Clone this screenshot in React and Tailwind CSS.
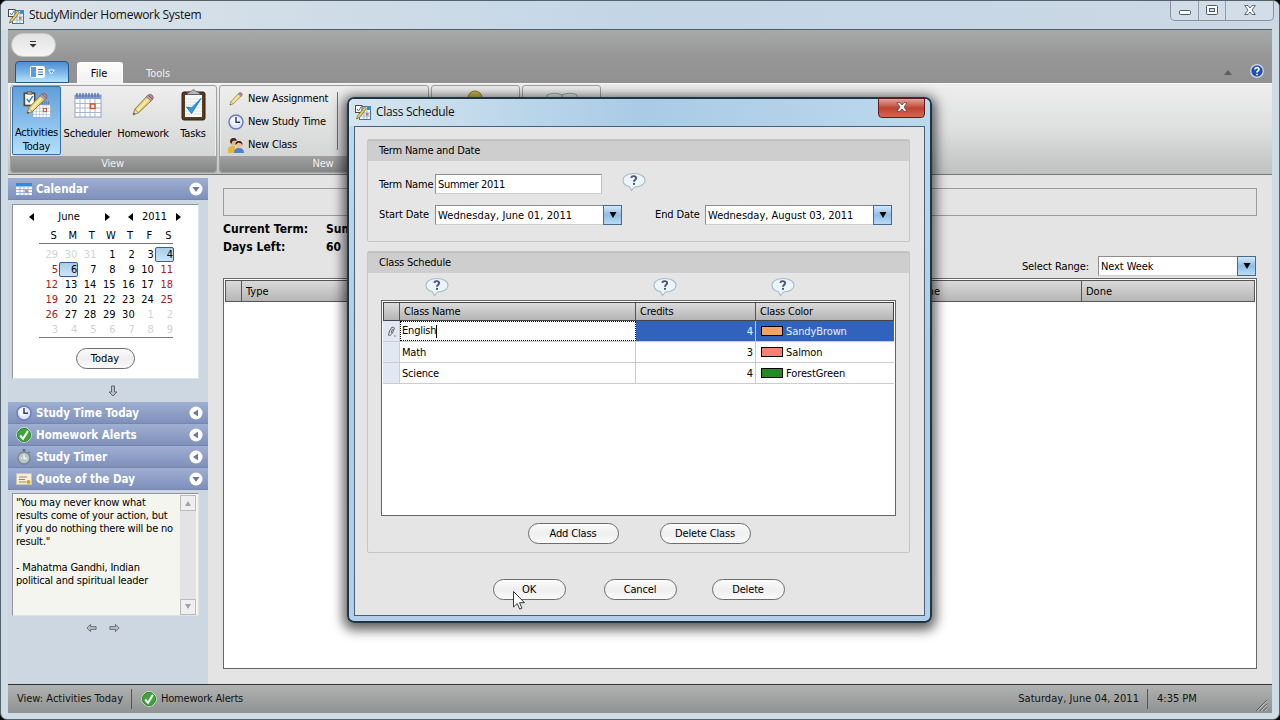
import React from "react";

const PencilShape = () => (
  <g>
    <path d="M4 28 L6 21 L22 4 L28 9 L11 25 Z" fill="#e9d27c" stroke="#8c7436" strokeWidth="1.2" />
    <path d="M8 22 L23.500 6 L25 7 L10 24 Z" fill="#f8efb6" />
    <path d="M20 6 L22 4 L28 9 L26 11 Z" fill="#a8adb5" stroke="#666" strokeWidth=".8" />
    <path d="M22.500 4 L24 2.500 Q28 3 29 7 L27.500 9 Z" fill="#c9808a" stroke="#80505a" strokeWidth=".8" />
    <path d="M4 28 L6 21.500 L10.500 25.500 Z" fill="#f3dfc0" stroke="#8c7436" strokeWidth=".8" />
    <path d="M4 28 L5 25.500 L6.500 27 Z" fill="#333" />
  </g>
);

const Pencil = ({ className }) => (
  <svg viewBox="0 0 32 32" className={className}>
    <PencilShape />
  </svg>
);

const CalShape = () => (
  <g>
    <rect x="3" y="6" width="26" height="22" fill="#fff" stroke="#8fa3c4" />
    <rect x="3" y="6" width="26" height="4" fill="#7f9bd0" />
    <path d="M5 4v4M8 4v4M11 4v4M14 4v4M17 4v4M20 4v4M23 4v4M26 4v4" stroke="#5470a8" strokeWidth="1.300" />
    <path d="M3 14.500h26M3 19h26M3 23.500h26M8 10v18M13 10v18M18 10v18M23 10v18" stroke="#9fb0cc" strokeWidth=".9" />
    <rect x="18.500" y="15" width="4.500" height="4.500" fill="#fff" stroke="#d5522c" strokeWidth="1.500" />
  </g>
);

const CalendarBig = () => (
  <svg viewBox="0 0 32 32" className="h-8 w-8">
    <CalShape />
  </svg>
);

const ActivitiesIcon = () => (
  <svg viewBox="0 0 32 32" className="h-8 w-8">
    <g transform="translate(9.500 9) scale(.72)">
      <CalShape />
    </g>
    <rect x="2.500" y="3.500" width="11" height="13" fill="#fff" stroke="#5b4634" strokeWidth="1.800" />
    <rect x="5.500" y="1.500" width="5" height="3" fill="#999" stroke="#555" strokeWidth=".6" />
    <path d="M5 9.500l2.500 3 4-6" fill="none" stroke="#3186c8" strokeWidth="1.600" />
    <g transform="translate(2 1) scale(.86)">
      <PencilShape />
    </g>
  </svg>
);

const TasksIcon = () => (
  <svg viewBox="0 0 32 32" className="h-8 w-8">
    <rect x="5" y="3" width="23" height="28" rx="2" fill="#5a3a1e" stroke="#33200f" />
    <rect x="8" y="6" width="17" height="22" fill="#f7fafc" />
    <path d="M8 10h17M8 13h17M8 16h17M8 19h17M8 22h17M8 25h17" stroke="#d3dce4" strokeWidth=".8" />
    <path d="M10 5.500 Q10 3 14 2.500 Q16.500 -1 19 2.500 Q23 3 23 5.500Z" fill="#b7babd" stroke="#555" strokeWidth=".8" />
    <path d="M9.500 18l5 6.500 9.500-15-9.500 9.500z" fill="#2f9fe0" stroke="#1c7fc0" strokeWidth="1" />
  </svg>
);

const ClockIcon = () => (
  <svg viewBox="0 0 16 16" className="h-4 w-4">
    <circle cx="8" cy="8" r="7" fill="#dfe6fa" stroke="#6c7cbc" strokeWidth="1.500" />
    <circle cx="7" cy="7" r="4" fill="#f6f9ff" />
    <path d="M8 3v5.300h4" fill="none" stroke="#333c78" strokeWidth="1.500" />
  </svg>
);

const TimerIcon = () => (
  <svg viewBox="0 0 16 16" className="h-4 w-4">
    <path d="M8 0v3M6.500 1h3M12.500 3l1 1" stroke="#5f6d70" strokeWidth="1.500" />
    <circle cx="8" cy="9" r="6" fill="#b9c6c6" stroke="#77868a" strokeWidth="1.300" />
    <path d="M8 5.500v4h3M5 9h1" fill="none" stroke="#f3f8f8" strokeWidth="1.300" />
  </svg>
);

const CheckCircle = () => (
  <svg viewBox="0 0 16 16" className="h-4 w-4">
    <circle cx="8" cy="8" r="7.200" fill="#3fa53a" stroke="#e3f2e0" strokeWidth="1" />
    <circle cx="8" cy="8" r="6.600" fill="none" stroke="#2c7c2a" strokeWidth=".9" />
    <path d="M4.200 8.500l2.800 3.400 5-8" fill="none" stroke="#fff" strokeWidth="2" />
  </svg>
);

const PeopleIcon = () => (
  <svg viewBox="0 0 16 16" className="h-4 w-4">
    <path d="M0 16v-5l3-2h4v7z" fill="#e6b73c" />
    <circle cx="5" cy="5.500" r="2.900" fill="#e7b48c" />
    <path d="M2 5q0-4 3.500-4 3.500 0 3 3-3-1-4 0l-1 3z" fill="#3b2416" />
    <path d="M6 16q0-5 5-5t5 5z" fill="#4c82d4" />
    <circle cx="11" cy="8" r="2.900" fill="#f0bf98" />
    <path d="M7.500 8q-.5-4 3.500-4 4 0 3.300 4.500l-1-2-3-1z" fill="#2b1a12" />
  </svg>
);

const AppIcon = () => (
  <svg viewBox="0 0 16 16" className="h-4 w-4 shrink-0">
    <rect x="4.500" y="2.500" width="11" height="13" fill="#eef3fa" stroke="#3c74b4" />
    <path d="M12 2h4v4h-4z" fill="#3c8ac8" />
    <path d="M6 9h9M6 12h9M9 5v10M12 5v10" stroke="#8db0d8" strokeWidth=".8" />
    <rect x=".5" y="1.500" width="6.500" height="7" fill="#fff" stroke="#4c4a3c" />
    <path d="M2 5l1.500 2 2.500-4" fill="none" stroke="#2a7ab8" />
    <path d="M1.500 15l1-3 7-9 2 1.500-7 9z" fill="#e9cf5e" stroke="#6f5a26" strokeWidth=".7" />
    <rect x="11" y="9" width="2.500" height="2.500" fill="#e0782c" />
  </svg>
);

const SmallCalendar = () => (
  <svg viewBox="0 0 16 16" className="h-4 w-4">
    <rect x="0" y="3" width="16" height="11" fill="#f5f9fd" />
    <rect x="0" y="2" width="16" height="3.500" fill="#2f8ae0" />
    <path d="M0 8.500h16M0 11.500h16M4 6v8M8 6v8M12 6v8" stroke="#85b4e0" strokeWidth=".9" />
    <rect x="9" y="9" width="3" height="3" fill="#e58b34" />
  </svg>
);

const NoteIcon = () => (
  <svg viewBox="0 0 16 16" className="h-4 w-4">
    <rect x=".500" y="2.500" width="15" height="11" fill="#f6efd8" stroke="#d8c79a" strokeDasharray="1.500 1" />
    <path d="M3 6h8M3 8.500h6M3 11h7" stroke="#948a74" />
    <circle cx="12.500" cy="11" r="2" fill="#d99a3c" />
  </svg>
);

const Bubble = ({ className = "" }) => (
  <svg viewBox="0 0 24 20" className={"h-5 w-6 shrink-0 " + className}>
    <path d="M12 1.500C5.500 1.500 1 4.300 1 8.200c0 3.200 2.700 5.600 6.500 6.500L9.500 18.500l3-3.500C18.500 14.800 23 12 23 8.200S18.500 1.500 12 1.500z" fill="#eef5fa" stroke="#a3bccb" strokeWidth="1.100" />
    <path d="M9.300 5.800C9.600 3.600 14.300 3.500 14.200 6.200 14.100 7.800 12 7.700 12 9.800" fill="none" stroke="#44557f" strokeWidth="1.900" />
    <rect x="11" y="10.900" width="2" height="1.900" fill="#44557f" />
  </svg>
);

const RoundArrow = ({ down }) => (
  <svg viewBox="0 0 14 14" className="mr-[5px] h-[14px] w-[14px]">
    <circle cx="7" cy="7" r="6.500" fill="#fff" />
    <path d={down ? "M3.500 5h7L7 10z" : "M9 3.500v7L4 7z"} fill="#6879a0" />
  </svg>
);

const Tri = ({ d, className }) => (
  <svg viewBox="0 0 8 8" className={className}>
    <path d={d} fill="#000" />
  </svg>
);

const OutlineArrow = ({ className }) => (
  <svg viewBox="0 0 12 10" className={className}>
    <path d="M1 5l4-4v2.500h6v3H5V9z" fill="#b9c0c6" stroke="#5f666c" strokeWidth="1" />
  </svg>
);

const PillButton = ({ children, className }) => (
  <div className={"flex h-[21px] items-center justify-center rounded-full border border-[#6d6d6d] bg-linear-to-b from-[#fbfbfb] via-[#efefef] to-[#fafafa] pr-px text-black " + className}>
    {children}
  </div>
);

const Combo = ({ children, className }) => (
  <div className={"flex h-5 border border-[#8c8c8c] border-r-[#d0d0d0] border-b-[#d0d0d0] bg-white pl-[2px] " + className}>
    <span className="flex flex-1 items-center pt-px">{children}</span>
    <span className="-mt-px -mr-px flex h-5 w-[19px] items-center justify-center border border-[#47698f] bg-linear-to-b from-[#d3e8f9] via-[#8fbde6] to-[#b9dcf5]">
      <Tri d="M.5 1h7L4 7z" className="h-2 w-2" />
    </span>
  </div>
);

const SideHeader = ({ icon, children, down }) => (
  <div className="flex h-[22px] items-center border-b border-[#7585b0] bg-linear-to-b from-[#9fafd2] to-[#7f90bb] pl-2 text-[11.500px] font-bold text-white">
    {icon}
    <span className="ml-1 flex-1">{children}</span>
    <RoundArrow down={down} />
  </div>
);

const weeks = [
  ["29", "30", "31", "1", "2", "3", "4"],
  ["5", "6", "7", "8", "9", "10", "11"],
  ["12", "13", "14", "15", "16", "17", "18"],
  ["19", "20", "21", "22", "23", "24", "25"],
  ["26", "27", "28", "29", "30", "1", "2"],
  ["3", "4", "5", "6", "7", "8", "9"],
];

function dayClass(w, d) {
  const out = (w === 0 && d < 3) || (w === 4 && d > 4) || w === 5;
  const marked = (w === 0 && d === 6) || (w === 1 && d === 1);
  const base = "flex h-[15px] items-center justify-end border ";
  if (marked) return base + "rounded-xs border-[#35608f] bg-linear-to-b from-[#a9cdea] to-[#cbe6f8] text-black";
  if (out) return base + "border-transparent text-[#d2d2d2]";
  if (d === 0 || d === 6) return base + "border-transparent text-[#a32020]";
  return base + "border-transparent text-black";
}

const Calendar = () => (
  <div className="mt-1 ml-1 flex h-[175px] w-[187px] flex-col border border-[#8f969c] border-r-[#dfe3e6] border-b-[#dfe3e6] bg-white">
    <div className="mt-1 flex h-[15px] items-center">
      <Tri d="M6 0v8L1 4z" className="ml-[15px] h-2 w-2" />
      <span className="w-[66px] text-center">June</span>
      <Tri d="M2 0v8L7 4z" className="ml-px h-2 w-2" />
      <Tri d="M6 0v8L1 4z" className="ml-[16px] h-2 w-2" />
      <span className="w-[39px] text-center">2011</span>
      <Tri d="M2 0v8L7 4z" className="h-2 w-2" />
    </div>
    <div className="mt-[5px] ml-[26px] grid w-[139px] grid-cols-7 pl-[5px] text-center leading-[13px]">
      {["S", "M", "T", "W", "T", "F", "S"].map((d, i) => (
        <span key={i}>{d}</span>
      ))}
    </div>
    <div className="mt-px ml-[26px] w-[134px] border-y border-[#777] pt-[3px]">
      <div className="ml-px grid w-[134px] grid-cols-7">
        {weeks.map((w, i) =>
          w.map((d, j) => (
            <span key={i + "-" + j} className={dayClass(i, j)}>
              {d}
            </span>
          ))
        )}
      </div>
    </div>
    <PillButton className="mt-[10px] ml-[63px] w-[59px] shrink-0">Today</PillButton>
  </div>
);

const RibbonGroup = ({ caption, className, children }) => (
  <div className={"flex h-[88px] flex-col overflow-hidden rounded-[3px] border border-[#9fa1a1] bg-linear-to-b from-[#eeeeee] to-[#cfd0d0] shadow-[inset_0_0_0_1px_#ededed] " + className}>
    <div className="flex h-[70px]">{children}</div>
    <div className="flex h-4 items-center justify-center bg-linear-to-b from-[#a1a1a1] to-[#848585] pr-[2px] text-[#f0f0f0]">{caption}</div>
  </div>
);

const BigButton = ({ icon, label, className }) => (
  <div className={"flex h-[69px] flex-col items-center pt-[3px] text-center leading-[14px] " + className}>
    {icon}
    <span className="mt-[6px]">{label}</span>
  </div>
);

const NewItem = ({ icon, children }) => (
  <div className="flex h-[23px] items-center gap-1">
    {icon}
    <span>{children}</span>
  </div>
);

const TitleBar = () => (
  <div className="flex h-[29px] justify-between bg-linear-to-r from-[#dce3e8] via-[#c3d6e6] to-[#ccd8e4]">
    <div className="flex items-center pl-[7px] font-['Open_Sans','Noto_Sans',sans-serif] text-[12px] tracking-[-0.29px] [font-stretch:normal]">
      <AppIcon />
      <span className="-mt-px ml-[5px] text-[#111]">StudyMinder Homework System</span>
    </div>
    <div className="mr-[5px] flex h-5 w-[104px] rounded-b-[5px] border border-t-0 border-[#8793a3] bg-[#d3dde8]">
      <div className="flex w-[28px] items-center justify-center border-r border-[#8f9cac] pt-1">
        <svg viewBox="0 0 12 5" className="h-[5px] w-3"><rect x=".5" y=".5" width="11" height="4" rx="1" fill="#fff" stroke="#4d5966" /></svg>
      </div>
      <div className="flex w-[27px] items-center justify-center border-r border-[#8f9cac] pb-px">
        <svg viewBox="0 0 12 10" className="h-[10px] w-3"><rect x=".5" y=".5" width="11" height="9" rx="1" fill="#fff" stroke="#4d5966" /><rect x="3.500" y="3.500" width="5" height="3" fill="#d3dde8" stroke="#4d5966" /></svg>
      </div>
      <div className="flex flex-1 items-center justify-center pb-px">
        <svg viewBox="0 0 12 10" className="h-[10px] w-3"><path d="M.7.5H4L6 3 8 .5h3.300L8 5l3.300 4.500H8L6 7 4 9.500H.7L4 5z" fill="#fff" stroke="#4d5966" strokeWidth=".9" /></svg>
      </div>
    </div>
  </div>
);

const RibbonTabs = () => (
  <div className="flex h-[54px] flex-col border-t border-[#4d5e6d] bg-linear-to-b from-[#a8aaaa] via-[#969696] to-[#919191]">
    <div className="mt-[3px] ml-[3px] flex h-6 w-[45px] items-center justify-center rounded-full border border-[#c9c9c9] bg-linear-to-b from-[#e2e2e2] to-[#f5f5f5] pr-px pb-px">
      <svg viewBox="0 0 8 7" className="h-[7px] w-2"><path d="M1 .5h6" stroke="#333" /><path d="M.5 3h7L4 6.500z" fill="#333" /></svg>
    </div>
    <div className="mt-1 flex h-[22px] items-end">
      <div className="ml-[7px] flex h-[22px] w-[54px] items-center justify-center gap-[3px] rounded-t-[4px] border border-[#23548c] bg-linear-to-b from-[#4f8fd2] via-[#79b5ea] to-[#b4e2fc]">
        <svg viewBox="0 0 15 12" className="h-3 w-[15px]"><rect x=".5" y=".5" width="14" height="11" rx="1" fill="#5d9bd8" stroke="#fff" /><path d="M6 1h8v10H6z" fill="#fff" /><path d="M8 3.500h5M8 6h5M8 8.500h5" stroke="#3f72ac" /></svg>
        <svg viewBox="0 0 7 6" className="h-[6px] w-[7px]"><path d="M.7 1h5.600L3.500 5z" fill="#4d90d6" stroke="#fff" /></svg>
      </div>
      <div className="ml-2 flex h-[21px] w-[46px] items-center justify-center rounded-t-[3px] border border-b-0 border-white bg-linear-to-b from-[#fdfdfd] to-[#f0f0f0] pt-px pr-[2px]">File</div>
      <div className="ml-[23px] flex h-5 items-center pt-px text-[#f0f0f0]">Tools</div>
      <div className="flex-1" />
      <div className="mr-2 flex h-[22px] items-center gap-[18px]">
        <svg viewBox="0 0 8 5" className="h-[5px] w-2"><path d="M0 5h8L4 0z" fill="#5e5e5e" /></svg>
        <svg viewBox="0 0 14 14" className="-mt-[2px] h-[14px] w-[14px]"><circle cx="7" cy="7" r="6.300" fill="#2450a8" stroke="#d3dff2" strokeWidth="1.200" /><path d="M5 5.500C5 3 9.200 3 9 5.500 8.900 6.900 7 6.700 7 8.500M7 9.700v1.600" stroke="#fff" strokeWidth="1.600" fill="none" /></svg>
      </div>
    </div>
  </div>
);

const Ribbon = () => (
  <div className="flex h-[92px] gap-[2px] border-t border-b border-t-[#f7f7f7] border-b-[#747777] bg-linear-to-b from-[#eeeeee] via-[#dedfdf] to-[#bfc1c1] pt-px pl-[2px] tracking-[-0.2px]">
    <RibbonGroup caption="View" className="w-[207px]">
      <BigButton icon={<ActivitiesIcon />} label={<>Activities<br />Today</>} className="ml-px w-[49px] rounded-[2px] border border-[#3a6fa6] bg-linear-to-b from-[#5f9fda] via-[#88bdec] to-[#b2e1fa] pt-[2px]" />
      <BigButton icon={<CalendarBig />} label="Scheduler" className="w-[53px]" />
      <BigButton icon={<Pencil className="my-[3px] h-[26px] w-[26px]" />} label="Homework" className="w-[58px]" />
      <BigButton icon={<TasksIcon />} label="Tasks" className="w-[42px]" />
    </RibbonGroup>
    <RibbonGroup caption="New" className="w-[210px]">
      <div className="flex w-[117px] flex-col pt-px pl-2">
        <NewItem icon={<Pencil className="h-4 w-4" />}>New Assignment</NewItem>
        <NewItem icon={<ClockIcon />}>New Study Time</NewItem>
        <NewItem icon={<PeopleIcon />}>New Class</NewItem>
      </div>
      <div className="mt-[6px] h-[58px] w-px bg-[#6e7174]" />
    </RibbonGroup>
    <RibbonGroup className="w-[89px]">
      <div className="flex w-full justify-center pt-1">
        <svg viewBox="0 0 20 24" className="h-6 w-5"><circle cx="9" cy="8" r="7" fill="#c9b94e" stroke="#8c7a2a" /><path d="M6 15h8v6H6z" fill="#999" /></svg>
      </div>
    </RibbonGroup>
    <RibbonGroup className="w-[79px]">
      <div className="flex w-full justify-center pt-[6px]">
        <svg viewBox="0 0 32 20" className="h-5 w-8"><path d="M1 3Q8-.5 16 3 24-.5 31 3v14q-8-4-15 0-8-4-15 0z" fill="#e6ebe8" stroke="#9aa6a2" /><path d="M16 3v14" stroke="#8b9894" /></svg>
      </div>
    </RibbonGroup>
  </div>
);

const ScrollButton = ({ up }) => (
  <div className="flex h-4 w-4 items-center justify-center border border-[#bcbcbc] bg-[#efefef]">
    <svg viewBox="0 0 8 6" className="h-[6px] w-2"><path d={up ? "M1 6h6L4 1z" : "M1 0h6L4 5z"} fill="#a2a2a2" /></svg>
  </div>
);

const Sidebar = () => (
  <div className="flex w-[200px] shrink-0 flex-col bg-[#cdd7e2]">
    <div className="h-[3px] bg-[#e4e4e4]" />
    <SideHeader icon={<SmallCalendar />} down>Calendar</SideHeader>
    <Calendar />
    <div className="flex h-[23px] items-center justify-center pl-[9px]">
      <OutlineArrow className="h-[10px] w-3 -rotate-90" />
    </div>
    <SideHeader icon={<ClockIcon />}>Study Time Today</SideHeader>
    <SideHeader icon={<CheckCircle />}>Homework Alerts</SideHeader>
    <SideHeader icon={<TimerIcon />}>Study Timer</SideHeader>
    <SideHeader icon={<NoteIcon />} down>Quote of the Day</SideHeader>
    <div className="mt-[3px] ml-1 flex h-[123px] w-[187px] border border-[#8f969c] border-r-[#dfe3e6] border-b-[#dfe3e6] bg-[#f3f5ee]">
      <div className="w-[167px] pt-[2px] pl-[3px] leading-[13px] tracking-[-0.2px]">
        "You may never know what<br />results come of your action, but<br />if you do nothing there will be no<br />result."<br /><br />- Mahatma Gandhi, Indian<br />political and spiritual leader
      </div>
      <div className="mt-px flex w-4 flex-col justify-between bg-[#e3e3e6]">
        <ScrollButton up />
        <ScrollButton />
      </div>
    </div>
    <div className="mt-[7px] flex gap-3 pl-[78px]">
      <OutlineArrow className="h-[10px] w-[11px]" />
      <OutlineArrow className="h-[10px] w-[11px] rotate-180" />
    </div>
  </div>
);

const MainPane = () => (
  <div className="flex flex-1 flex-col bg-[#e4e4e4] pr-[15px] pl-[15px]">
    <div className="mt-[13px] h-7 w-[1034px] border border-[#9b9b9b]" />
    <div className="mt-[4px] grid grid-cols-[103px_1fr] text-[12px] leading-[18px] font-bold tracking-[0.08px]">
      <span>Current Term:</span>
      <span>Summer 2011</span>
      <span>Days Left:</span>
      <span>60</span>
    </div>
    <div className="flex h-5 items-center justify-end pr-px">
      <span className="mr-[9px] pt-px tracking-[-0.1px]">Select Range:</span>
      <Combo className="w-[158px]"><span className="tracking-[-0.1px]">Next Week</span></Combo>
    </div>
    <div className="mt-[2px] h-[391px] w-[1034px] border border-[#666] bg-white p-px">
      <div className="flex h-[22px] border border-[#555] bg-linear-to-b from-[#dadada] to-[#b6b6b6]">
        <div className="w-4 border-r border-[#555]" />
        <div className="flex w-[660px] items-center pt-px pl-1">Type</div>
        <div className="flex w-[180px] items-center justify-end border-r border-[#555] pt-px pr-[141px]">Time</div>
        <div className="flex items-center pt-px pl-1">Done</div>
      </div>
    </div>
  </div>
);

const StatusBar = () => (
  <div className="flex h-[29px] items-center border-t border-[#333] bg-linear-to-b from-[#b1b3b2] to-[#8f9291] text-[#111]">
    <span className="w-[123px] pl-[9px]">View: Activities Today</span>
    <div className="h-5 w-px bg-[#555]" />
    <div className="ml-[9px] flex items-center gap-1 tracking-[-0.2px]">
      <CheckCircle />
      <span>Homework Alerts</span>
    </div>
    <div className="flex-1" />
    <span className="tracking-[0.05px]">Saturday, June 04, 2011</span>
    <div className="ml-2 h-5 w-px bg-[#555]" />
    <span className="ml-[9px] w-[98px]">4:35 PM</span>
    <svg viewBox="0 0 14 14" className="mt-3 mr-1 h-[13px] w-[13px]"><path d="M1 13L13 1M5 13l8-8M9 13l4-4" stroke="#555" /><path d="M2.500 13L13 2.500M6.500 13L13 6.500M10.500 13l2.500-2.500" stroke="#ddd" strokeWidth=".7" /></svg>
  </div>
);

const classes = [
  { name: "English", credits: 4, color: "SandyBrown", swatch: "bg-[#f4a460]" },
  { name: "Math", credits: 3, color: "Salmon", swatch: "bg-[#fa8072]" },
  { name: "Science", credits: 4, color: "ForestGreen", swatch: "bg-[#228b22]" },
];

const ClassRow = ({ row, active }) => (
  <div className={"flex h-[21px] border-b border-[#c9cdd1] " + (active ? "bg-[#3163bd] text-[#e6f0ff]" : "bg-white")}>
    <div className="flex w-[17px] items-center justify-center border-r border-[#c5cfdc] bg-[#e1e8f3]">
      {active && (
        <svg viewBox="0 0 9 11" className="h-[11px] w-[9px]"><path d="M1.500 9l1-4L5 1l2.500 1L5.500 7 2.500 10zM4 7l1.500-4M7 10h1.500" fill="none" stroke="#555" strokeWidth=".9" /></svg>
      )}
    </div>
    {active ? (
      <div className="flex w-[236px] items-center border border-dotted border-black bg-white pl-px text-black">
        <span className="tracking-[-0.2px]">{row.name}</span>
        <span className="h-[13px] w-px bg-black" />
      </div>
    ) : (
      <div className="flex w-[236px] items-center border-r border-[#c9cdd1] pt-[2px] pl-[2px] tracking-[-0.2px]">{row.name}</div>
    )}
    <div className="flex w-[120px] items-center justify-end border-r border-[#c9cdd1] pt-[2px] pr-[2px]">{row.credits}</div>
    <div className="flex flex-1 items-center pl-[5px] tracking-[-0.1px]">
      <span className={"mr-[3px] h-[10px] w-[22px] border border-black " + row.swatch} />
      <span className="pt-[2px]">{row.color}</span>
    </div>
  </div>
);

const Fieldset = ({ title, className, children }) => (
  <div className={"flex flex-col rounded-[2px] border border-[#c6c6c6] bg-[#e5e5e5] " + className}>
    <div className="flex h-[21px] shrink-0 items-center border-t border-[#bdbdbd] bg-[#cecece] pl-[11px] tracking-[-0.2px]">{title}</div>
    {children}
  </div>
);

const Dialog = () => (
  <div className="absolute top-[97px] left-[347px] flex h-[526px] w-[585px] flex-col rounded-[7px] border-2 border-[#1d3644] bg-linear-to-b from-[#bfdbee] via-[#b0cde2] to-[#b3cfe9] shadow-[0_3px_12px_4px_rgba(0,0,0,0.62)]">
    <div className="flex h-[27px] justify-between rounded-t-[5px] bg-linear-to-r from-[#d6e6ef] via-[#a9cbe6] to-[#bcd8ec]">
      <div className="-mt-[2px] flex items-center pl-[6px] font-['Open_Sans','Noto_Sans',sans-serif] text-[12px] tracking-[-0.3px] text-[#111] [font-stretch:normal]">
        <AppIcon />
        <span className="ml-[5px]">Class Schedule</span>
      </div>
      <div className="mr-[5px] -mt-px flex h-5 w-[47px] items-center justify-center rounded-b-[4px] border border-[#5f1b18] bg-linear-to-b from-[#dfa59a] via-[#bd4231] to-[#d5684f] pb-[2px]">
        <svg viewBox="0 0 12 10" className="h-[10px] w-3"><path d="M1 .7h3L6 3 8 .7h3L8 5l3 4.300H8L6 7 4 9.300H1L4 5z" fill="#fff" stroke="#5c3f48" strokeWidth=".8" /></svg>
      </div>
    </div>
    <div className="mx-[5px] mb-[5px] flex flex-1 flex-col border border-[#46617c] bg-[#e5e5e5] pl-3">
      <Fieldset title="Term Name and Date" className="mt-3 h-[103px] w-[543px]">
        <div className="mt-[13px] flex h-5 items-center pl-[11px]">
          <span className="w-[56px] pt-px tracking-[-0.2px]">Term Name</span>
          <div className="flex h-5 w-[167px] items-center border border-[#8c8c8c] border-r-[#c0c0c0] border-b-[#d0d0d0] bg-white pt-px pl-[2px] tracking-[-0.3px]">Summer 2011</div>
          <Bubble className="-mt-[5px] ml-5" />
        </div>
        <div className="mt-[11px] flex h-5 items-center pl-[11px]">
          <span className="w-[56px] tracking-[-0.1px]">Start Date</span>
          <Combo className="w-[187px]"><span className="tracking-[0.08px]">Wednesday, June 01, 2011</span></Combo>
          <span className="ml-[33px] w-[50px] tracking-[-0.1px]">End Date</span>
          <Combo className="w-[187px]">Wednesday, August 03, 2011</Combo>
        </div>
      </Fieldset>
      <Fieldset title="Class Schedule" className="mt-[9px] h-[302px] w-[543px]">
        <div className="mt-1 flex h-[23px] pl-[57px]">
          <Bubble />
          <Bubble className="ml-[204px]" />
          <Bubble className="ml-[94px]" />
        </div>
        <div className="ml-[13px] h-[216px] w-[515px] border border-[#666] bg-white p-px">
          <div className="flex h-[19px] border border-[#444] bg-linear-to-b from-[#dcdcdc] to-[#b4b4b4] tracking-[-0.2px]">
            <div className="w-4 border-r border-[#555]" />
            <div className="flex w-[236px] items-center border-r border-[#555] pl-1">Class Name</div>
            <div className="flex w-[120px] items-center border-r border-[#555] pl-1">Credits</div>
            <div className="flex items-center pl-1">Class Color</div>
          </div>
          {classes.map((c, i) => (
            <ClassRow key={c.name} row={c} active={i === 0} />
          ))}
        </div>
        <div className="mt-[7px] flex gap-[41px] pl-[160px] tracking-[-0.15px]">
          <PillButton className="w-[91px]">Add Class</PillButton>
          <PillButton className="w-[91px]">Delete Class</PillButton>
        </div>
      </Fieldset>
      <div className="mt-[26px] flex pl-[126px] tracking-[-0.15px]">
        <PillButton className="w-[73px]">OK</PillButton>
        <PillButton className="ml-[38px] w-[73px]">Cancel</PillButton>
        <PillButton className="ml-[35px] w-[73px]">Delete</PillButton>
      </div>
    </div>
  </div>
);

export default function App() {
  return (
    <div className="relative h-[720px] w-[1280px] overflow-hidden bg-black font-['DejaVu_Sans_Condensed','DejaVu_Sans',sans-serif] text-[11px] leading-[14px] whitespace-nowrap text-black [font-stretch:condensed]">
      <div className="flex h-[720px] w-[1280px] flex-col overflow-hidden rounded-[7px] border border-[#55636f] bg-[#cfdbe5]">
        <TitleBar />
        <div className="mx-[7px] -mt-px flex h-[684px] flex-col">
          <RibbonTabs />
          <Ribbon />
          <div className="flex h-[509px]">
            <Sidebar />
            <MainPane />
          </div>
          <StatusBar />
        </div>
      </div>
      <Dialog />
      <svg viewBox="0 0 12 19" className="absolute top-[591px] left-[513px] h-[19px] w-3"><path d="M.5.5v15.500l3.700-3.500 2.500 5.600 2.300-1-2.500-5.400h5z" fill="#fff" stroke="#222" strokeWidth=".9" /></svg>
    </div>
  );
}
